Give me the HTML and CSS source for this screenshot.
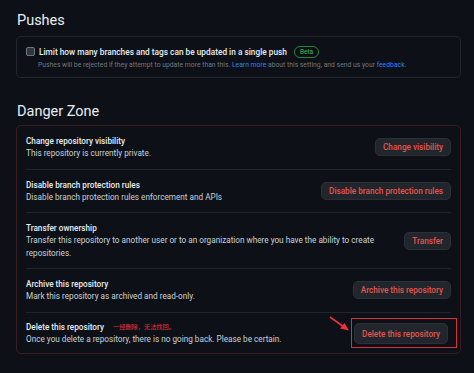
FILE: index.html
```html
<!DOCTYPE html>
<html>
<head>
<meta charset="utf-8">
<link rel="stylesheet" href="styles.css">
</head>
<body>
<div class="page">
  <h2 class="heading">Pushes</h2>
  <div class="box">
    <div class="check-row">
      <span class="checkbox"></span>
      <span class="check-label">Limit how many branches and tags can be updated in a single push</span>
      <span class="badge">Beta</span>
    </div>
    <p class="note">Pushes will be rejected if they attempt to update more than this. <span class="link">Learn more</span> about this setting, and send us your <span class="link">feedback</span>.</p>
  </div>

  <h2 class="heading danger-heading">Danger Zone</h2>
  <div class="box danger-box">
    <div class="row">
      <div class="info">
        <div class="title">Change repository visibility</div>
        <div class="desc">This repository is currently private.</div>
      </div>
      <button class="btn">Change visibility</button>
    </div>
    <div class="row">
      <div class="info">
        <div class="title">Disable branch protection rules</div>
        <div class="desc">Disable branch protection rules enforcement and APIs</div>
      </div>
      <button class="btn">Disable branch protection rules</button>
    </div>
    <div class="row">
      <div class="info">
        <div class="title">Transfer ownership</div>
        <div class="desc narrow">Transfer this repository to another user or to an organization where you have the ability to create repositories.</div>
      </div>
      <button class="btn">Transfer</button>
    </div>
    <div class="row">
      <div class="info">
        <div class="title">Archive this repository</div>
        <div class="desc">Mark this repository as archived and read-only.</div>
      </div>
      <button class="btn">Archive this repository</button>
    </div>
    <div class="row last">
      <div class="info">
        <div class="title">Delete this repository <span class="annot">一经删除，无法找回。</span></div>
        <div class="desc">Once you delete a repository, there is no going back. Please be certain.</div>
      </div>
      <div class="highlight">
        <svg class="arrow" width="22" height="16" viewBox="0 0 22 16"><line x1="1" y1="1" x2="15" y2="11" stroke="#e8323c" stroke-width="1.6"/><polygon points="20,14.5 11,12.5 15.5,7" fill="#e8323c"/></svg>
        <button class="btn">Delete this repository</button>
      </div>
    </div>
  </div>
</div>
</body>
</html>
```
FILE: styles.css
```css
html, body {
  margin: 0;
  padding: 0;
  background: #0d1117;
}
body {
  font-family: Roboto, "Noto Sans", "Noto Sans CJK SC", sans-serif;
  color: #e6edf3;
  width: 474px;
  height: 373px;
  overflow: hidden;
}
.page {
  padding: 11px 13px 0 16px;
}
.heading {
  margin: 0 0 5px 1px;
  font-size: 14.5px;
  font-weight: 400;
  line-height: 20px;
  color: #e6edf3;
}
.danger-heading {
  margin-top: 24px;
  margin-bottom: 3px;
}
.box {
  border: 1px solid #21262d;
  border-radius: 5px;
  padding: 8px 9px 7px;
}
.check-row {
  display: flex;
  align-items: center;
  height: 13px;
}
.checkbox {
  width: 7px;
  height: 7px;
  border: 1px solid #6e7681;
  background: #30363d;
  border-radius: 2px;
  margin-right: 4px;
}
.check-label {
  font-size: 8.3px;
  font-weight: 500;
  color: #e6edf3;
}
.badge {
  margin-left: 7px;
  font-size: 6.5px;
  color: #3fb950;
  border: 1px solid #238636;
  border-radius: 8px;
  padding: 0 5px;
  line-height: 10px;
}
.note {
  margin: 2px 0 0 12px;
  font-size: 6.8px;
  color: #6e7681;
  line-height: 10px;
}
.link {
  color: #2f81f7;
}
.danger-box {
  border-color: #3a1d22;
  padding: 0 9px;
}
.row {
  display: flex;
  align-items: center;
  justify-content: space-between;
  border-bottom: 1px solid #21262d;
  padding: 9px 0;
}
.row.last {
  border-bottom: none;
  padding: 8px 0;
}
.info {
  flex: 1;
  min-width: 0;
  padding-right: 20px;
}
.desc.narrow {
  max-width: 350px;
}
.title {
  font-size: 8.2px;
  font-weight: 500;
  line-height: 12px;
  color: #e6edf3;
}
.desc {
  font-size: 8.2px;
  line-height: 12.5px;
  color: #c9d1d9;
}
.annot {
  font-size: 6.2px;
  font-weight: 400;
  color: #e8323c;
  margin-left: 7px;
  vertical-align: 1px;
}
.btn {
  flex: none;
  background: #21262d;
  border: 1px solid #2b3038;
  border-radius: 5px;
  color: #e5534b;
  font-family: Roboto, "Noto Sans", sans-serif;
  font-size: 8.2px;
  font-weight: 500;
  height: 18px;
  padding: 0 7px;
  line-height: 16px;
  white-space: nowrap;
}
.highlight {
  position: relative;
  border: 1.5px solid #d9303b;
  padding: 3px 8px 3px 2px;
  margin: -3px -6px -3px 0;
}
.highlight .btn {
  height: 21px;
}
.arrow {
  position: absolute;
  left: -23px;
  top: -3px;
}
```
